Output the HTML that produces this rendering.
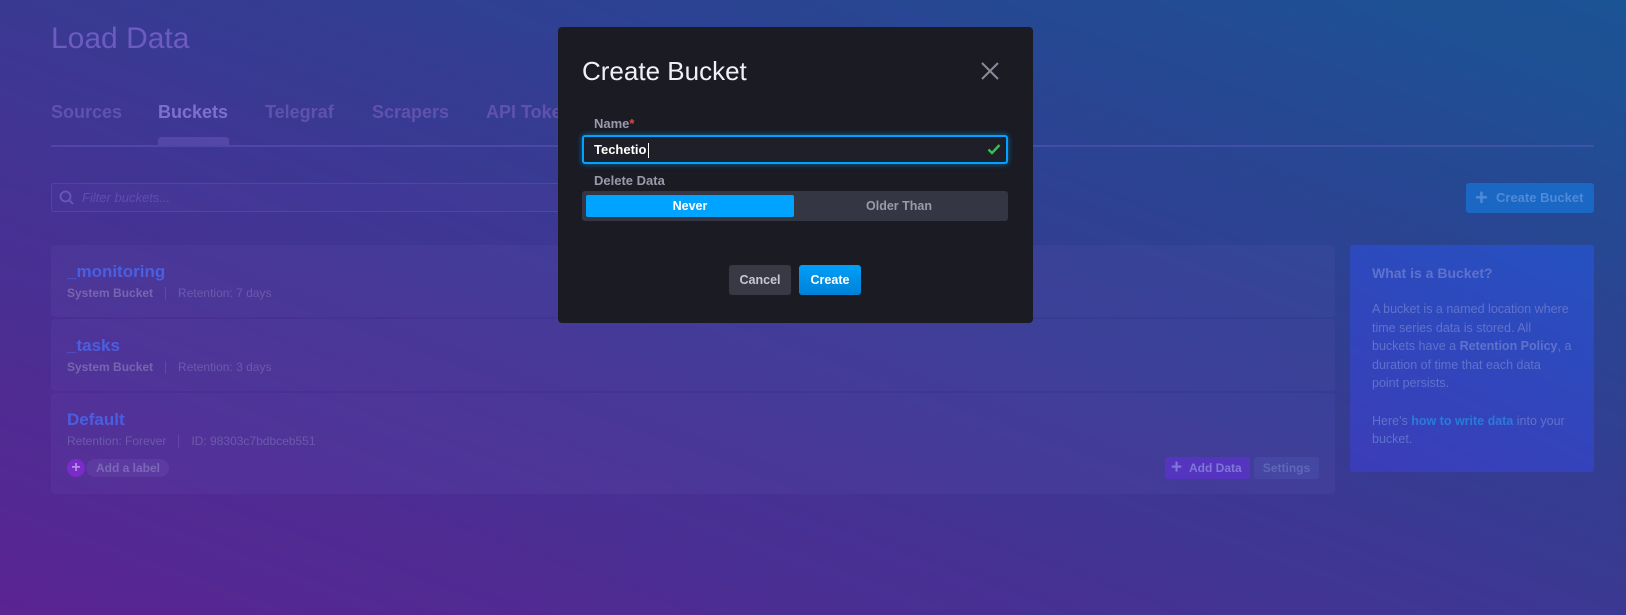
<!DOCTYPE html>
<html><head><style>
*{box-sizing:border-box;margin:0;padding:0}
body{width:1626px;height:615px;overflow:hidden;font-family:"Liberation Sans",sans-serif;background:linear-gradient(20deg,#5a2492 0%,#423493 40%,#2c4292 70%,#1a5495 100%);position:relative}
.a{position:absolute}
.h1{left:51px;top:22px;font-size:30px;color:#6c5cc0}
.tab{top:102px;font-size:18px;font-weight:bold;color:#5e52ad}
.card{background:rgba(120,110,200,0.10);border-radius:4px}
.name{font-size:17px;font-weight:bold;color:#4a5fe0}
.meta{font-size:12px;color:#6b5aad}
.meta b{color:#7666b0}
.sep{display:inline-block;width:1px;height:13px;background:rgba(130,110,200,.35);margin:0 12px;vertical-align:middle}
.modal{left:558px;top:27px;width:475px;height:296px;background:#1a1b23;border-radius:4px}
.lbl{font-size:13px;font-weight:bold;color:#9a9aab}
</style></head><body>
<div class="a h1">Load Data</div>
<div class="a tab" style="left:51px">Sources</div>
<div class="a tab" style="left:158px;color:#7d70cc">Buckets</div>
<div class="a tab" style="left:265px">Telegraf</div>
<div class="a tab" style="left:372px">Scrapers</div>
<div class="a tab" style="left:486px">API Tokens</div>
<div class="a" style="left:158px;top:137px;width:71px;height:8px;background:rgba(110,90,190,.45);border-radius:3px 3px 0 0"></div>
<div class="a" style="left:51px;top:145px;width:1543px;height:2px;background:rgba(100,90,190,.45)"></div>
<div class="a" style="left:51px;top:183px;width:560px;height:29px;border:1px solid rgba(110,95,200,.35);border-radius:3px;background:rgba(90,70,170,.15)"></div>
<svg class="a" style="left:59px;top:190px" width="16" height="16" viewBox="0 0 16 16"><circle cx="6.5" cy="6.5" r="5" fill="none" stroke="#6858b8" stroke-width="1.8"/><path d="M10 10l4 4" stroke="#6858b8" stroke-width="1.8"/></svg>
<div class="a" style="left:82px;top:190px;font-size:13px;font-style:italic;color:#5e4fae">Filter buckets...</div>
<div class="a" style="left:1466px;top:183px;width:128px;height:30px;background:#1a68c4;border-radius:3px;color:#4f8ad8;font-size:13px;font-weight:bold;line-height:30px;padding-left:30px">Create Bucket</div>
<div class="a" style="left:1475px;top:190px;font-size:22px;line-height:16px;color:#4f8ad8;font-weight:bold">+</div>

<div class="a card" style="left:51px;top:245px;width:1284px;height:72px"></div>
<div class="a name" style="left:67px;top:262px">_monitoring</div>
<div class="a meta" style="left:67px;top:286px"><b>System Bucket</b><span class="sep"></span>Retention: 7 days</div>
<div class="a card" style="left:51px;top:319px;width:1284px;height:72px"></div>
<div class="a name" style="left:67px;top:336px">_tasks</div>
<div class="a meta" style="left:67px;top:360px"><b>System Bucket</b><span class="sep"></span>Retention: 3 days</div>
<div class="a card" style="left:51px;top:393px;width:1284px;height:101px"></div>
<div class="a name" style="left:67px;top:410px">Default</div>
<div class="a meta" style="left:67px;top:434px">Retention: Forever<span class="sep"></span>ID: 98303c7bdbceb551</div>
<div class="a" style="left:67px;top:459px;width:18px;height:18px;border-radius:50%;background:#7a2bc8;color:#b88ce8;font-size:16px;line-height:17px;text-align:center;font-weight:bold">+</div>
<div class="a" style="left:86px;top:459px;width:83px;height:18px;border-radius:9px;background:rgba(130,100,200,.2);color:#7a68b8;font-size:12px;font-weight:bold;line-height:18px;padding-left:10px">Add a label</div>
<div class="a" style="left:1165px;top:457px;width:85px;height:22px;background:#5534c0;border-radius:3px;color:#7f78d8;font-size:12px;font-weight:bold;line-height:22px;padding-left:24px">Add Data</div>
<div class="a" style="left:1171px;top:457px;font-size:19px;line-height:21px;color:#7f78d8;font-weight:bold">+</div>
<div class="a" style="left:1254px;top:457px;width:65px;height:22px;background:rgba(80,90,180,.35);border-radius:3px;color:#5f68b8;font-size:12px;font-weight:bold;line-height:22px;text-align:center">Settings</div>

<div class="a" style="left:1350px;top:245px;width:244px;height:227px;border-radius:3px;background:linear-gradient(25deg,#3c3cb8,#2551c0)"></div>
<div class="a" style="left:1372px;top:265px;font-size:14px;font-weight:bold;color:#5f72cc">What is a Bucket?</div>
<div class="a" style="left:1372px;top:300px;white-space:nowrap;font-size:12.5px;line-height:18.6px;color:#5f72cc">A bucket is a named location where<br>time series data is stored. All<br>buckets have a <b>Retention Policy</b>, a<br>duration of time that each data<br>point persists.<br><br>Here's <b style="color:#2a7ad8">how to write data</b> into your<br>bucket.</div>

<div class="a modal"></div>
<div class="a" style="left:582px;top:56px;font-size:26px;color:#f0f0f5">Create Bucket</div>
<svg class="a" style="left:981px;top:62px" width="18" height="18" viewBox="0 0 18 18"><path d="M1 1L17 17M17 1L1 17" stroke="#8a8a98" stroke-width="2"/></svg>
<div class="a lbl" style="left:594px;top:116px">Name<span style="color:#e04a4a">*</span></div>
<div class="a" style="left:582px;top:135px;width:426px;height:29px;border:2px solid #00a3ff;border-radius:3px;background:#1e1f28;box-shadow:0 0 6px rgba(0,163,255,.6)"></div>
<div class="a" style="left:594px;top:142px;font-size:13px;font-weight:bold;color:#fff">Techetio<span style="display:inline-block;width:1px;height:15px;background:#fff;vertical-align:middle;margin-left:1px"></span></div>
<svg class="a" style="left:987px;top:143px" width="14" height="12" viewBox="0 0 14 12"><path d="M1.5 6.5L5 10L12.5 2" stroke="#34c152" stroke-width="2.4" fill="none"/></svg>
<div class="a lbl" style="left:594px;top:173px">Delete Data</div>
<div class="a" style="left:582px;top:191px;width:426px;height:30px;background:#353643;border-radius:3px"></div>
<div class="a" style="left:586px;top:195px;width:208px;height:22px;background:#00a3ff;border-radius:2px;color:#fff;font-size:12.5px;font-weight:bold;text-align:center;line-height:22px">Never</div>
<div class="a" style="left:794px;top:195px;width:210px;height:22px;color:#9a9aab;font-size:12.5px;font-weight:bold;text-align:center;line-height:22px">Older Than</div>
<div class="a" style="left:729px;top:265px;width:62px;height:30px;background:#383945;border-radius:3px;color:#c8c8d2;font-size:12.5px;font-weight:bold;text-align:center;line-height:30px">Cancel</div>
<div class="a" style="left:799px;top:265px;width:62px;height:30px;background:linear-gradient(0deg,#0080d8,#00a0f8);border-radius:3px;color:#fff;font-size:12.5px;font-weight:bold;text-align:center;line-height:30px">Create</div>
</body></html>
